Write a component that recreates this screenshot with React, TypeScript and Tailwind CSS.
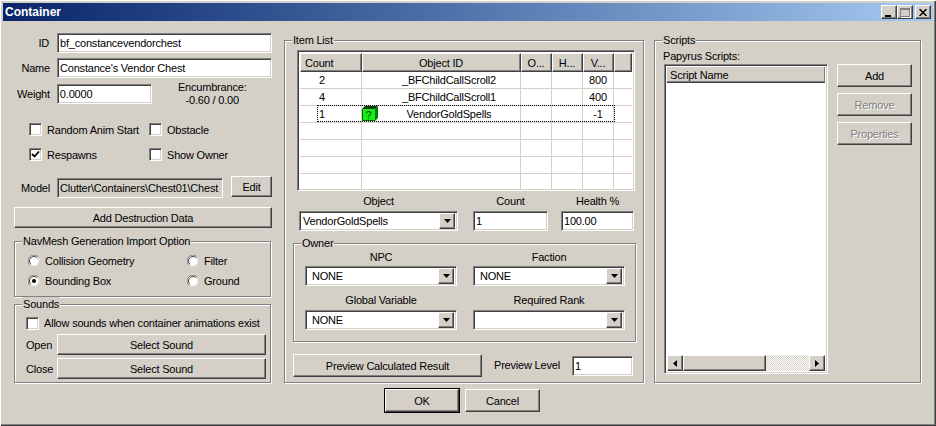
import React from 'react';

const RAISED =
  'border border-t-white border-l-white border-r-[#404040] border-b-[#404040] shadow-[inset_-1px_-1px_0_#808080]';
const SUNKEN =
  'border border-t-[#808080] border-l-[#808080] border-r-white border-b-white shadow-[inset_1px_1px_0_#404040,inset_-1px_-1px_0_#d4d0c8]';

const COLUMNS = ['Count', 'Object ID', 'O...', 'H...', 'V...', ''];
const ROW_GRID = 'grid grid-cols-[62px_159px_31px_31px_31px_1fr]';

const ROWS = [
  { count: '2', id: '_BFChildCallScroll2', value: '800' },
  { count: '4', id: '_BFChildCallScroll1', value: '400' },
  { count: '1', id: 'VendorGoldSpells', value: '-1', focused: true },
  { count: '', id: '', value: '' },
  { count: '', id: '', value: '' },
  { count: '', id: '', value: '' },
];

function Button({ label, className, disabled }: { label: string; className: string; disabled?: boolean }) {
  return (
    <div
      className={`flex items-center justify-center ${RAISED} ${className} ${
        disabled ? 'text-[#808080] [text-shadow:1px_1px_0_#fff]' : ''
      }`}
    >
      {label}
    </div>
  );
}

function Input({ value, className, readOnly }: { value: string; className: string; readOnly?: boolean }) {
  return (
    <div
      className={`flex items-center pl-[2px] overflow-hidden whitespace-nowrap ${SUNKEN} ${
        readOnly ? 'bg-[#d4d0c8]' : 'bg-white'
      } ${className}`}
    >
      {value}
    </div>
  );
}

function Arrow({ direction }: { direction: 'down' | 'left' | 'right' }) {
  const points = direction === 'down' ? '0,0 7,0 3.5,4' : direction === 'left' ? '4,0 4,7 0,3.5' : '0,0 0,7 4,3.5';
  const w = direction === 'down' ? 7 : 4;
  const h = direction === 'down' ? 4 : 7;
  return (
    <svg width={w} height={h} viewBox={`0 0 ${w} ${h}`}>
      <polygon points={points} fill="#000" />
    </svg>
  );
}

function Combo({ value, className, indent }: { value: string; className: string; indent?: boolean }) {
  return (
    <div
      className={`flex items-center justify-between bg-white pr-[2px] ${indent ? 'pl-[6px]' : 'pl-[3px]'} ${SUNKEN} ${className}`}
    >
      <span>{value}</span>
      <div className={`flex items-center justify-center w-[16px] h-[16px] bg-[#d4d0c8] ${RAISED}`}>
        <Arrow direction="down" />
      </div>
    </div>
  );
}

function Check({ label, checked, className }: { label: string; checked?: boolean; className?: string }) {
  return (
    <div className={`flex items-center gap-[5px] whitespace-nowrap ${className ?? ''}`}>
      <div className={`flex items-center justify-center w-[13px] h-[13px] bg-white ${SUNKEN}`}>
        {checked && (
          <svg width="9" height="9" viewBox="0 0 9 9">
            <path d="M1 4 L3.5 6.5 L8 1.5" fill="none" stroke="#000" strokeWidth="1.8" />
          </svg>
        )}
      </div>
      <span>{label}</span>
    </div>
  );
}

function Radio({ label, checked, className }: { label: string; checked?: boolean; className?: string }) {
  return (
    <div className={`flex items-center gap-[5px] whitespace-nowrap ${className ?? ''}`}>
      <svg width="12" height="12" viewBox="0 0 12 12">
        <circle cx="6" cy="6" r="5.5" fill="#fff" />
        <path d="M1.8 10.2 A5.7 5.7 0 0 1 10.2 1.8" fill="none" stroke="#808080" strokeWidth="1" />
        <path d="M2.8 9.2 A4.5 4.5 0 0 1 9.2 2.8" fill="none" stroke="#404040" strokeWidth="1" />
        <path d="M3 9.8 A4.7 4.7 0 0 0 9.8 3" fill="none" stroke="#d4d0c8" strokeWidth="1" />
        {checked && <circle cx="6" cy="6" r="2" fill="#000" />}
      </svg>
      <span>{label}</span>
    </div>
  );
}

function Group({ title, className, children }: { title: string; className: string; children: React.ReactNode }) {
  return (
    <div className={`relative border border-[#808080] shadow-[1px_1px_0_#fff,inset_1px_1px_0_#fff] ${className}`}>
      <span className="absolute left-[7px] top-[-8px] bg-[#d4d0c8] px-[1px] leading-[14px]">{title}</span>
      {children}
    </div>
  );
}

function Caption({ children, className }: { children: React.ReactNode; className: string }) {
  return <div className={`text-center leading-[14px] ${className}`}>{children}</div>;
}

function UnknownItemIcon() {
  return (
    <svg width="16" height="15" viewBox="0 0 16 15">
      <polygon points="0,3 3,0 16,0 13,3" fill="#063a06" />
      <polygon points="13,3 16,0 16,12 13,15" fill="#0a7a0a" />
      <rect x="0" y="3" width="13" height="12" fill="#14ee14" />
      <path d="M0.5 3 V14.5 H13" fill="none" stroke="#0a5a0a" />
      <text x="6.5" y="13" fontSize="11" textAnchor="middle" fill="#063a06" fontFamily="Liberation Sans, sans-serif">
        ?
      </text>
    </svg>
  );
}

function ItemTable() {
  return (
    <div className={`w-[338px] h-[141px] ml-[12px] mt-[9px] p-[2px] bg-white overflow-hidden ${SUNKEN}`}>
      <div className={`${ROW_GRID} h-[19px] bg-[#d4d0c8]`}>
        {COLUMNS.map((col, i) => (
          <div
            key={i}
            className={`flex items-center ${i === 0 ? 'pl-[4px]' : 'justify-center'} pr-[1px] ${RAISED} overflow-hidden`}
          >
            {col}
          </div>
        ))}
      </div>
      {ROWS.map((row, i) => (
        <div key={i} className={`relative ${ROW_GRID} h-[17px] border-b border-[#d4d0c8]`}>
          <div className="flex items-center pl-[19px] border-r border-[#d4d0c8]">{row.count}</div>
          <div className="relative flex items-center justify-center pl-[16px] border-r border-[#d4d0c8]">
            {row.focused && (
              <span className="absolute left-0 top-0">
                <UnknownItemIcon />
              </span>
            )}
            {row.id}
          </div>
          <div className="border-r border-[#d4d0c8]" />
          <div className="border-r border-[#d4d0c8]" />
          <div className="flex items-center justify-center border-r border-[#d4d0c8]">{row.value}</div>
          {row.focused && (
            <div className="absolute left-[17px] top-[-1px] w-[298px] h-[17px] border border-dotted border-black" />
          )}
        </div>
      ))}
      <div className={`${ROW_GRID} h-[17px]`}>
        <div className="border-r border-[#d4d0c8]" />
        <div className="border-r border-[#d4d0c8]" />
        <div className="border-r border-[#d4d0c8]" />
        <div className="border-r border-[#d4d0c8]" />
        <div className="border-r border-[#d4d0c8]" />
      </div>
    </div>
  );
}

function LeftColumn() {
  return (
    <div className="w-[258px] ml-[11px] mt-[12px]">
      <div className="flex items-center">
        <span className="w-[36px] text-right pr-[1px]">ID</span>
        <Input value="bf_constancevendorchest" className="w-[215px] h-[20px] ml-[7px]" />
      </div>
      <div className="flex items-center mt-[5px]">
        <span className="w-[36px] text-right">Name</span>
        <Input value="Constance's Vendor Chest" className="w-[215px] h-[20px] ml-[7px]" />
      </div>
      <div className="flex items-center h-[20px] mt-[6px]">
        <span className="w-[36px] text-right">Weight</span>
        <Input value="0.0000" className="w-[96px] h-[20px] ml-[7px]" />
        <div className="w-[120px] text-center leading-[13px]">
          Encumbrance:
          <br />
          -0.60 / 0.00
        </div>
      </div>
      <div className="flex items-center mt-[19px] ml-[15px] h-[13px]">
        <Check label="Random Anim Start" className="w-[120px]" />
        <Check label="Obstacle" />
      </div>
      <div className="flex items-center mt-[12px] ml-[15px] h-[13px]">
        <Check label="Respawns" checked className="w-[120px]" />
        <Check label="Show Owner" />
      </div>
      <div className="flex items-center mt-[17px]">
        <span className="w-[36px] text-right">Model</span>
        <Input value="Clutter\Containers\Chest01\Chest" readOnly className="w-[166px] h-[20px] ml-[7px]" />
        <Button label="Edit" className="w-[41px] h-[21px] ml-[8px] mt-[-3px]" />
      </div>
      <Button label="Add Destruction Data" className="w-[258px] h-[21px] mt-[9px]" />
      <Group title="NavMesh Generation Import Option" className="w-[257px] h-[56px] mt-[13px]">
        <div className="flex mt-[12px] ml-[13px] h-[14px]">
          <Radio label="Collision Geometry" className="w-[159px]" />
          <Radio label="Filter" />
        </div>
        <div className="flex mt-[6px] ml-[13px] h-[14px]">
          <Radio label="Bounding Box" checked className="w-[159px]" />
          <Radio label="Ground" />
        </div>
      </Group>
      <Group title="Sounds" className="w-[257px] h-[79px] mt-[7px]">
        <Check label="Allow sounds when container animations exist" className="mt-[10px] ml-[11px]" />
        <div className="flex items-center mt-[3px] ml-[11px]">
          <span className="w-[31px]">Open</span>
          <Button label="Select Sound" className="w-[209px] h-[21px]" />
        </div>
        <div className="flex items-center mt-[3px] ml-[11px]">
          <span className="w-[31px]">Close</span>
          <Button label="Select Sound" className="w-[209px] h-[21px]" />
        </div>
      </Group>
    </div>
  );
}

function MiddleColumn() {
  return (
    <Group title="Item List" className="w-[360px] h-[343px] ml-[12px] mt-[19px]">
      <ItemTable />
      <div className="flex ml-[14px] mt-[3px]">
        <div className="w-[159px]">
          <Caption className="mb-[3px]">Object</Caption>
          <Combo value="VendorGoldSpells" className="w-[159px] h-[20px]" />
        </div>
        <div className="w-[75px] ml-[15px]">
          <Caption className="mb-[3px]">Count</Caption>
          <Input value="1" className="w-[75px] h-[20px]" />
        </div>
        <div className="w-[73px] ml-[13px]">
          <Caption className="mb-[3px]">Health %</Caption>
          <Input value="100.00" className="w-[73px] h-[20px]" />
        </div>
      </div>
      <Group title="Owner" className="w-[343px] h-[99px] ml-[8px] mt-[12px]">
        <div className="flex ml-[11px] mt-[6px]">
          <div className="w-[152px]">
            <Caption className="mb-[2px]">NPC</Caption>
            <Combo value="NONE" indent className="w-[152px] h-[20px]" />
          </div>
          <div className="w-[152px] ml-[16px]">
            <Caption className="mb-[2px]">Faction</Caption>
            <Combo value="NONE" indent className="w-[152px] h-[20px]" />
          </div>
        </div>
        <div className="flex ml-[11px] mt-[7px]">
          <div className="w-[152px]">
            <Caption className="mb-[3px]">Global Variable</Caption>
            <Combo value="NONE" indent className="w-[152px] h-[20px]" />
          </div>
          <div className="w-[152px] ml-[16px]">
            <Caption className="mb-[3px]">Required Rank</Caption>
            <Combo value="" className="w-[152px] h-[20px]" />
          </div>
        </div>
      </Group>
      <div className="flex items-center ml-[8px] mt-[12px]">
        <Button label="Preview Calculated Result" className="w-[189px] h-[23px]" />
        <span className="ml-[12px] w-[68px] whitespace-nowrap mt-[-2px]">Preview Level</span>
        <Input value="1" className="w-[61px] h-[20px] ml-[10px]" />
      </div>
    </Group>
  );
}

function ScriptList() {
  return (
    <div className={`flex flex-col w-[164px] h-[310px] p-[2px] bg-white ${SUNKEN}`}>
      <div className={`flex items-center h-[16px] pl-[3px] bg-[#d4d0c8] ${RAISED} border-t-0 border-l-0 border-r-0`}>
        Script Name
      </div>
      <div className="flex-1" />
      <div className="flex h-[16px]">
        <div className={`flex items-center justify-center w-[16px] bg-[#d4d0c8] ${RAISED}`}>
          <Arrow direction="left" />
        </div>
        <div className={`w-[83px] bg-[#d4d0c8] ${RAISED}`} />
        <div className="flex-1 bg-[repeating-conic-gradient(#d4d0c8_0%_25%,#ffffff_0%_50%)] bg-[length:2px_2px]" />
        <div className={`flex items-center justify-center w-[16px] bg-[#d4d0c8] ${RAISED}`}>
          <Arrow direction="right" />
        </div>
      </div>
    </div>
  );
}

function RightColumn() {
  return (
    <Group title="Scripts" className="w-[267px] h-[343px] ml-[10px] mt-[19px]">
      <div className="ml-[8px] mt-[8px] leading-[14px]">Papyrus Scripts:</div>
      <div className="flex ml-[9px] mt-[1px]">
        <ScriptList />
        <div className="flex flex-col gap-[6px] ml-[9px]">
          <Button label="Add" className="w-[75px] h-[23px]" />
          <Button label="Remove" disabled className="w-[75px] h-[23px]" />
          <Button label="Properties" disabled className="w-[75px] h-[23px]" />
        </div>
      </div>
    </Group>
  );
}

function WindowButton({ children, className }: { children: React.ReactNode; className?: string }) {
  return (
    <div className={`flex items-center justify-center w-[16px] h-[14px] bg-[#d4d0c8] ${RAISED} ${className ?? ''}`}>
      {children}
    </div>
  );
}

export default function App() {
  return (
    <div className="w-[936px] h-[426px] overflow-hidden bg-[#d4d0c8] p-[3px] text-[11px] tracking-[-0.2px] leading-[16px] text-black font-['Liberation_Sans',sans-serif] shadow-[inset_1px_1px_0_#fff,inset_-1px_-1px_0_#404040,inset_-2px_-2px_0_#808080]">
      <div className="flex items-center justify-between h-[18px] pl-[2px] pr-[2px] bg-gradient-to-r from-[#0a246a] to-[#a6caf0]">
        <span className="font-bold text-white text-[12px] tracking-normal">Container</span>
        <div className="flex">
          <WindowButton>
            <div className="w-[6px] h-[2px] bg-black mt-[7px] mr-[3px]" />
          </WindowButton>
          <WindowButton>
            <div className="w-[10px] h-[9px] border border-[#808080] border-t-2 shadow-[1px_1px_0_#fff]" />
          </WindowButton>
          <WindowButton className="ml-[2px]">
            <svg width="8" height="7" viewBox="0 0 8 7">
              <path d="M0.5 0 L7.5 7 M7.5 0 L0.5 7" stroke="#000" strokeWidth="1.5" />
            </svg>
          </WindowButton>
        </div>
      </div>
      <div className="flex items-start">
        <LeftColumn />
        <MiddleColumn />
        <RightColumn />
      </div>
      <div className="flex justify-center gap-[6px] mt-[6px] pr-[11px]">
        <Button label="OK" className="w-[74px] h-[23px] outline outline-1 outline-black" />
        <Button label="Cancel" className="w-[75px] h-[23px]" />
      </div>
    </div>
  );
}
